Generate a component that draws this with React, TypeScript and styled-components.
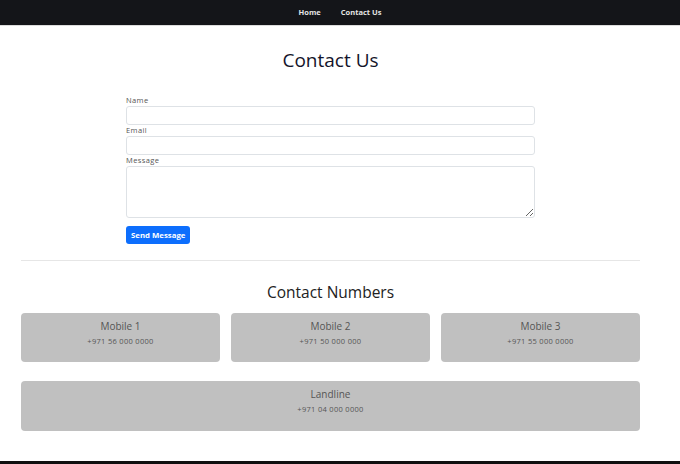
import React from "react";
import styled, { createGlobalStyle } from "styled-components";

const GlobalStyle = createGlobalStyle`
  html, body {
    margin: 0;
    padding: 0;
    background: #ffffff;
    font-family: "Open Sans", "Noto Sans", sans-serif;
  }
  * {
    box-sizing: border-box;
  }
`;

const numbers = [
  { label: "Mobile 1", value: "+971 56 000 0000" },
  { label: "Mobile 2", value: "+971 50 000 000" },
  { label: "Mobile 3", value: "+971 55 000 0000" },
];

export default function App() {
  return (
    <Page>
      <GlobalStyle />
      <NavBar>
        <NavLink href="#">Home</NavLink>
        <NavLink href="#">Contact Us</NavLink>
      </NavBar>

      <Container>
        <Title>Contact Us</Title>

        <Form onSubmit={(e) => e.preventDefault()}>
          <Label htmlFor="name">Name</Label>
          <Input id="name" type="text" />
          <Label htmlFor="email">Email</Label>
          <Input id="email" type="email" />
          <Label htmlFor="message">Message</Label>
          <TextArea id="message" />
          <SendButton type="submit">Send Message</SendButton>
        </Form>

        <Divider />

        <SubTitle>Contact Numbers</SubTitle>
        <CardGrid>
          {numbers.map((n) => (
            <Card key={n.label}>
              <CardTitle>{n.label}</CardTitle>
              <CardNumber>{n.value}</CardNumber>
            </Card>
          ))}
        </CardGrid>
        <WideCard>
          <CardTitle>Landline</CardTitle>
          <CardNumber>+971 04 000 0000</CardNumber>
        </WideCard>
      </Container>

      <Footer />
    </Page>
  );
}

const Page = styled.div`
  display: flex;
  flex-direction: column;
  min-height: 100vh;
`;

const NavBar = styled.nav`
  height: 26px;
  background: #141519;
  border-bottom: 1px solid #dcdcdc;
  display: flex;
  align-items: center;
  justify-content: center;
  gap: 20px;
  padding-bottom: 2px;
`;

const NavLink = styled.a`
  color: #e4e4e4;
  font-family: "Open Sans", sans-serif;
  font-weight: 700;
  font-size: 7.5px;
  text-decoration: none;
`;

const Container = styled.main`
  width: 619px;
  margin-left: 21px;
  display: flex;
  flex-direction: column;
`;

const Title = styled.h1`
  margin: 22px 0 0;
  font-size: 19px;
  line-height: 24px;
  font-weight: 400;
  color: #14142a;
  text-align: center;
`;

const Form = styled.form`
  width: 409px;
  margin: 24px auto 0;
  display: flex;
  flex-direction: column;
  align-items: flex-start;
`;

const Label = styled.label`
  font-size: 7.5px;
  line-height: 9px;
  letter-spacing: 0.4px;
  color: #555;
  margin-bottom: 1px;
`;

const Input = styled.input`
  width: 100%;
  height: 19px;
  border: 1px solid #dee2e6;
  border-radius: 3px;
  outline: none;
  margin: 0 0 1px;
`;

const TextArea = styled.textarea`
  width: 100%;
  height: 52px;
  border: 1px solid #dee2e6;
  border-radius: 3px;
  outline: none;
  margin: 0;
  resize: vertical;
`;

const SendButton = styled.button`
  margin-top: 8px;
  height: 18px;
  padding: 0 5px;
  border: none;
  border-radius: 3px;
  background: #0d6efd;
  color: #ffffff;
  font-family: "Open Sans", sans-serif;
  font-weight: 700;
  font-size: 7.8px;
`;

const Divider = styled.hr`
  width: 100%;
  margin: 16px 0 0;
  border: none;
  border-top: 1px solid #e6e6e6;
`;

const SubTitle = styled.h2`
  margin: 21px 0 0;
  font-size: 15.5px;
  line-height: 20px;
  font-weight: 400;
  color: #222;
  text-align: center;
`;

const CardGrid = styled.div`
  margin-top: 11px;
  display: grid;
  grid-template-columns: repeat(3, 1fr);
  gap: 11px;
`;

const Card = styled.div`
  height: 49px;
  background: #c0c0c0;
  border-radius: 4px;
  display: flex;
  flex-direction: column;
  align-items: center;
  padding-top: 6px;
`;

const WideCard = styled(Card)`
  margin-top: 19px;
  height: 50px;
`;

const CardTitle = styled.div`
  font-size: 10px;
  line-height: 14px;
  color: #555;
`;

const CardNumber = styled.div`
  margin-top: 2px;
  font-size: 7.5px;
  line-height: 12px;
  color: #555;
  letter-spacing: 0.3px;
`;

const Footer = styled.footer`
  margin-top: 30px;
  height: 40px;
  background: #101010;
  flex-shrink: 0;
`;
